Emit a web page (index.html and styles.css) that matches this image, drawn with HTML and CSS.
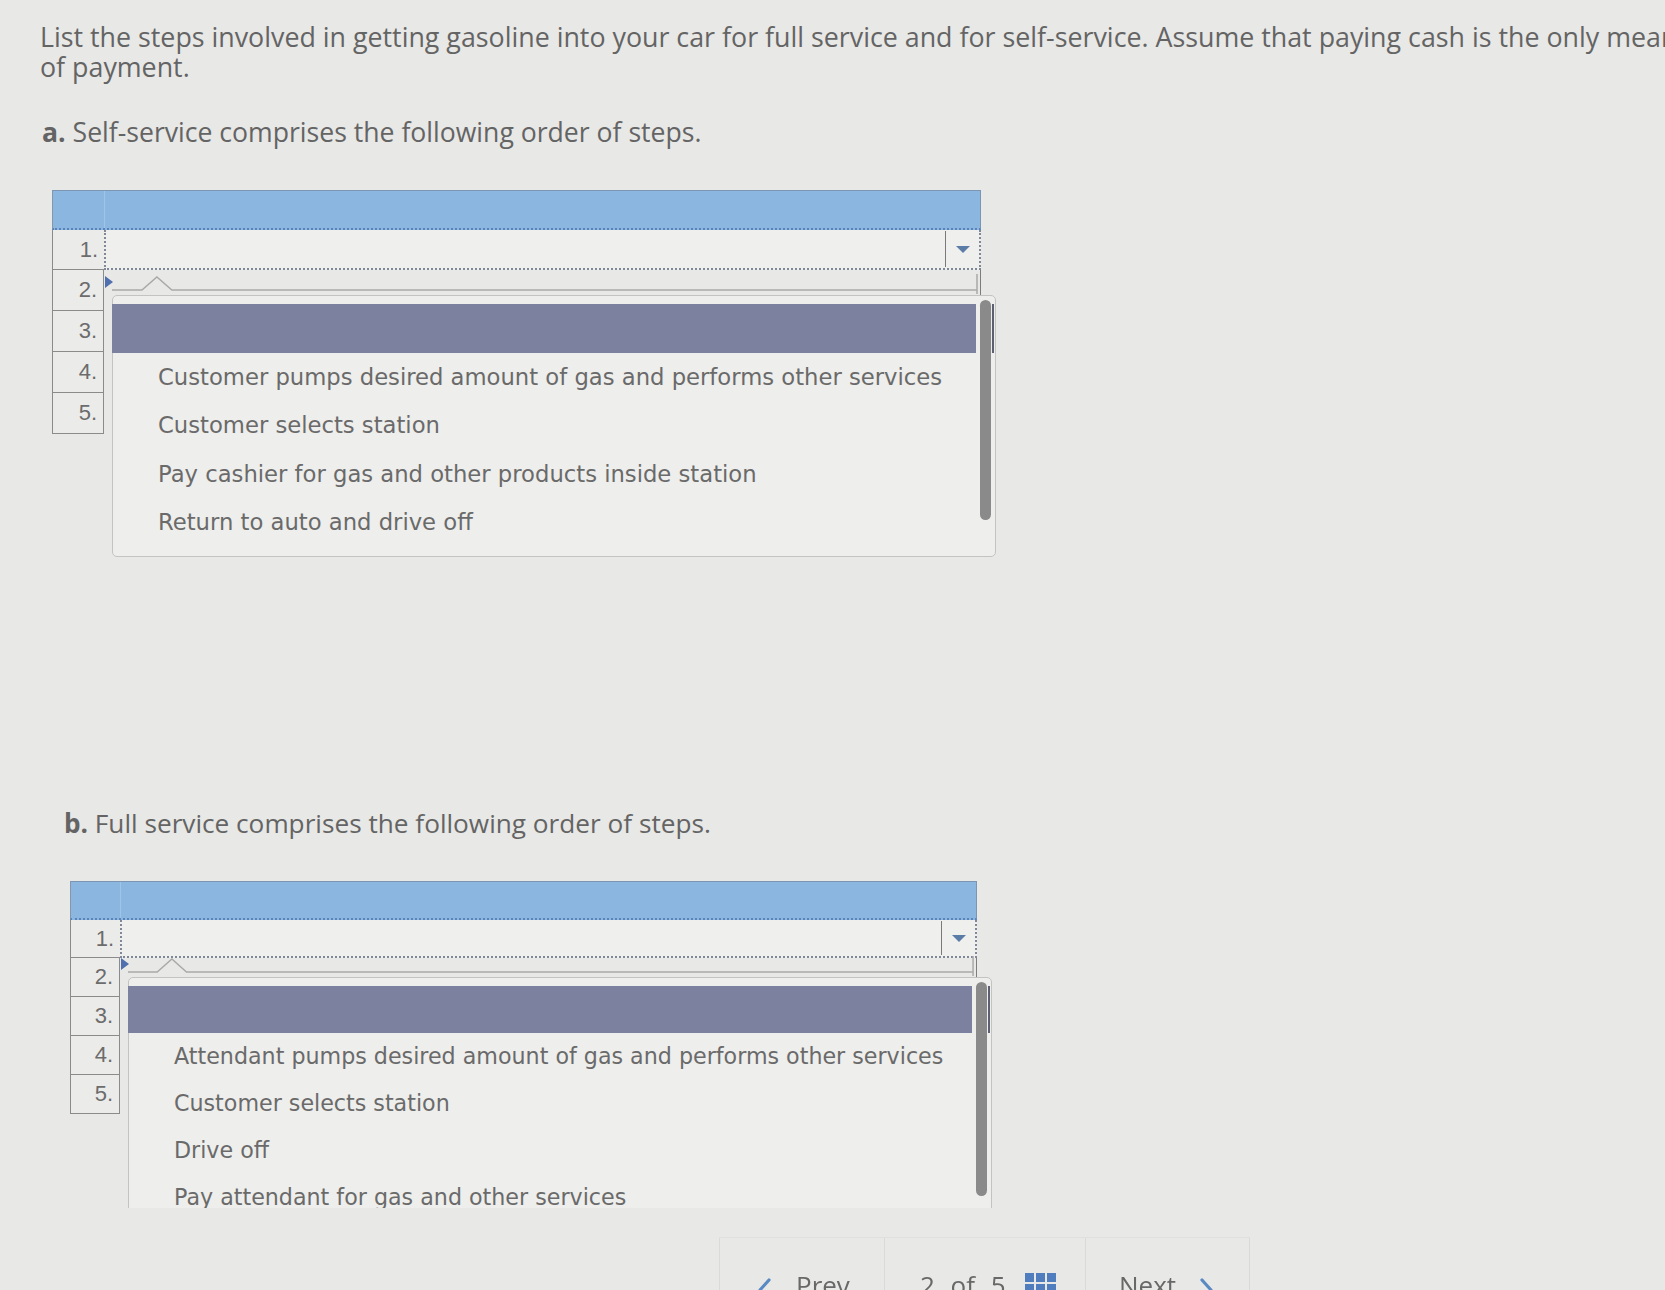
FILE: index.html
```html
<!DOCTYPE html>
<html lang="en">
<head>
<meta charset="utf-8">
<title>Gasoline steps</title>
<link rel="stylesheet" href="styles.css">
</head>
<body>
<main class="page">
  <p class="intro">List the steps involved in getting gasoline into your car for full service and for self-service. Assume that paying cash is the only means<br>of payment.</p>

  <section class="part part-a">
    <h2 class="part-title"><b>a.</b> Self-service comprises the following order of steps.</h2>
    <div class="steps">
      <div class="steps-head"><span class="head-num"></span><span class="head-main"></span></div>
      <div class="step step-first"><span class="num">1.</span><div class="select"><span class="select-sep"></span><span class="select-arrow"></span></div></div>
      <div class="step"><span class="num">2.</span><span class="cell"></span></div>
      <div class="step"><span class="num">3.</span><span class="cell"></span></div>
      <div class="step"><span class="num">4.</span><span class="cell"></span></div>
      <div class="step"><span class="num">5.</span><span class="cell"></span></div>
      <span class="pointer"></span>
      <svg class="notch" viewBox="0 0 869 20" preserveAspectRatio="none"><path d="M0 16 H30 L45 3 L60 16 H867 M867 0 V20" fill="none" stroke="#a9a9a9" stroke-width="1.5"/></svg>
      <div class="dropdown">
        <ul class="options">
          <li class="option active"></li>
          <li class="option">Customer pumps desired amount of gas and performs other services</li>
          <li class="option">Customer selects station</li>
          <li class="option">Pay cashier for gas and other products inside station</li>
          <li class="option">Return to auto and drive off</li>
        </ul>
        <span class="scroll-edge"></span>
        <span class="scroll-thumb"></span>
      </div>
    </div>
  </section>

  <section class="part part-b">
    <h2 class="part-title"><b>b.</b> Full service comprises the following order of steps.</h2>
    <div class="steps">
      <div class="steps-head"><span class="head-num"></span><span class="head-main"></span></div>
      <div class="step step-first"><span class="num">1.</span><div class="select"><span class="select-sep"></span><span class="select-arrow"></span></div></div>
      <div class="step"><span class="num">2.</span><span class="cell"></span></div>
      <div class="step"><span class="num">3.</span><span class="cell"></span></div>
      <div class="step"><span class="num">4.</span><span class="cell"></span></div>
      <div class="step"><span class="num">5.</span><span class="cell"></span></div>
      <span class="pointer"></span>
      <svg class="notch" viewBox="0 0 869 20" preserveAspectRatio="none"><path d="M0 16 H30 L45 3 L60 16 H867 M867 0 V20" fill="none" stroke="#a9a9a9" stroke-width="1.5"/></svg>
      <div class="dropdown">
        <ul class="options">
          <li class="option active"></li>
          <li class="option">Attendant pumps desired amount of gas and performs other services</li>
          <li class="option">Customer selects station</li>
          <li class="option">Drive off</li>
          <li class="option">Pay attendant for gas and other services</li>
        </ul>
        <span class="scroll-edge"></span>
        <span class="scroll-thumb"></span>
      </div>
    </div>
  </section>
</main>

<footer class="footer">
  <nav class="pager">
    <div class="pager-cell pager-prev">
      <svg class="chev" viewBox="0 0 14 24"><polyline points="12,2 3,12 12,22" fill="none" stroke="#5a8ac4" stroke-width="3.2" stroke-linecap="round" stroke-linejoin="round"/></svg>
      <span>Prev</span>
    </div>
    <div class="pager-cell pager-count">
      <span class="count-text">2 of 5</span>
      <span class="grid-icon"><i></i><i></i><i></i><i></i><i></i><i></i><i></i><i></i><i></i></span>
    </div>
    <div class="pager-cell pager-next">
      <span>Next</span>
      <svg class="chev" viewBox="0 0 14 24"><polyline points="2,2 11,12 2,22" fill="none" stroke="#5a8ac4" stroke-width="3.2" stroke-linecap="round" stroke-linejoin="round"/></svg>
    </div>
  </nav>
</footer>
</body>
</html>
```

FILE: styles.css
```css
* { box-sizing: border-box; }

html, body {
  margin: 0;
  padding: 0;
}

body {
  width: 1665px;
  height: 1290px;
  overflow: hidden;
  background: #e8e8e6;
  color: #646464;
  font-family: "Open Sans", "Liberation Sans", sans-serif;
}

.page {
  padding: 22px 0 0 40px;
}

.intro {
  margin: 0;
  font-size: 26.8px;
  line-height: 30px;
  white-space: nowrap;
}

.part-title {
  margin: 0;
  font-size: 26.6px;
  line-height: 30px;
  font-weight: 400;
  white-space: nowrap;
}

.part-title b { font-weight: 700; }

.part-a .part-title { margin: 35px 0 0 2px; }
.part-b .part-title { margin: 374px 0 0 24px; font-size: 26.2px; }

/* ---------- step table ---------- */
.part-a {
  --numw: 52px;
  --head: 40px;
  --row1: 40px;
  --row: 41px;
  --drop-top: 105px;
  --opt: 48.5px;
  --optfs: 22.7px;
  --thumb: 220px;
  --tw: 929px;
  --tml: 12px;
}

.part-b {
  --numw: 50px;
  --head: 39px;
  --row1: 38px;
  --row: 39px;
  --drop-top: 96px;
  --opt: 47px;
  --optfs: 22.2px;
  --thumb: 214px;
  --tw: 907px;
  --tml: 30px;
}

.steps {
  position: relative;
  width: var(--tw);
  margin: 43px 0 0 var(--tml);
}

.steps-head {
  display: grid;
  grid-template-columns: var(--numw) 1fr;
  height: var(--head);
  background: #8ab6e0;
  border-top: 1px solid #7b95b3;
  border-left: 1px solid #8797aa;
  border-right: 1px solid #7b95b3;
  border-bottom: 2px dotted #5a84b9;
}

.head-num { border-right: 1px solid #9fc4e8; }

.step {
  display: grid;
  grid-template-columns: var(--numw) 1fr;
  height: var(--row);
}

.step-first { height: var(--row1); }

.num {
  border: 1px solid #8b8b8b;
  border-top: none;
  background: #ebebe9;
  padding-right: 6px;
  text-align: right;
  font-family: "Liberation Sans", Arial, sans-serif;
  font-size: 22px;
  line-height: calc(var(--row) - 1px);
  color: #6c6c6c;
}

.step-first .num {
  border-right: none;
  line-height: calc(var(--row1) - 1px);
}

.cell { border-right: 1px solid #7d7d7d; }

.select {
  position: relative;
  background: #efefed;
  border: 2px dotted #7f8898;
  border-top: none;
}

.select-sep {
  position: absolute;
  right: 33px;
  top: 1px;
  bottom: 1px;
  width: 1px;
  background: #7a7a7a;
}

.select-arrow {
  position: absolute;
  right: 9px;
  top: 50%;
  margin-top: -3px;
  border-top: 7px solid #5c7ca8;
  border-left: 7px solid transparent;
  border-right: 7px solid transparent;
}

.pointer {
  position: absolute;
  left: calc(var(--numw) + 1px);
  top: calc(var(--drop-top) - 19px);
  border-left: 8px solid #4f6fae;
  border-top: 6px solid transparent;
  border-bottom: 6px solid transparent;
}

.notch {
  position: absolute;
  left: calc(var(--numw) + 8px);
  top: calc(var(--drop-top) - 21px);
  width: calc(var(--tw) - var(--numw) - 10px);
  height: 20px;
}

/* ---------- dropdown list ---------- */
.dropdown {
  position: absolute;
  left: calc(var(--numw) + 8px);
  right: -15px;
  top: var(--drop-top);
  padding: 8px 19px 9px 0;
  background: #eeeeec;
  border: 1px solid #c3c3c1;
  border-radius: 5px;
}

.options {
  list-style: none;
  margin: 0;
  padding: 0;
}

.option {
  height: var(--opt);
  padding-left: 45px;
  font-family: "DejaVu Sans", Verdana, sans-serif;
  font-size: var(--optfs);
  line-height: var(--opt);
  color: #6a6a6a;
  white-space: nowrap;
}

.option.active {
  margin-left: -1px;
  background: #7b819f;
}

.scroll-edge {
  position: absolute;
  right: 1px;
  top: 8px;
  width: 2px;
  height: var(--opt);
  background: #5d6070;
}

.scroll-thumb {
  position: absolute;
  right: 4px;
  top: 4px;
  width: 11px;
  height: var(--thumb);
  border-radius: 6px;
  background: #8a8a8a;
}

/* ---------- footer pager ---------- */
.footer {
  position: fixed;
  left: 0;
  right: 0;
  bottom: 0;
  height: 82px;
  background: #e8e8e6;
  padding-top: 29px;
}

.pager {
  display: flex;
  margin-left: 719px;
  height: 53px;
  border-top: 1px solid #e0e0de;
  width: 531px;
}

.pager-cell {
  display: flex;
  align-items: flex-start;
  padding-top: 32px;
  border-left: 1px solid #dadad8;
  font-size: 26px;
  line-height: 30px;
  color: #686868;
}

.pager-prev { width: 165px; padding-left: 37px; }
.pager-count { width: 201px; padding-left: 35px; }
.pager-next { width: 165px; padding-left: 33px; border-right: 1px solid #dadad8; }

.pager-prev span { margin-left: 25px; }
.pager-next span { margin-right: 24px; }

.count-text { word-spacing: 9px; }

.chev {
  width: 14px;
  height: 24px;
  margin-top: 8px;
  flex: none;
}

.grid-icon {
  display: grid;
  grid-template-columns: repeat(3, 9px);
  grid-auto-rows: 9px;
  gap: 2px;
  margin: 3px 0 0 19px;
}

.grid-icon i {
  display: block;
  background: #4f7dbd;
}
```
